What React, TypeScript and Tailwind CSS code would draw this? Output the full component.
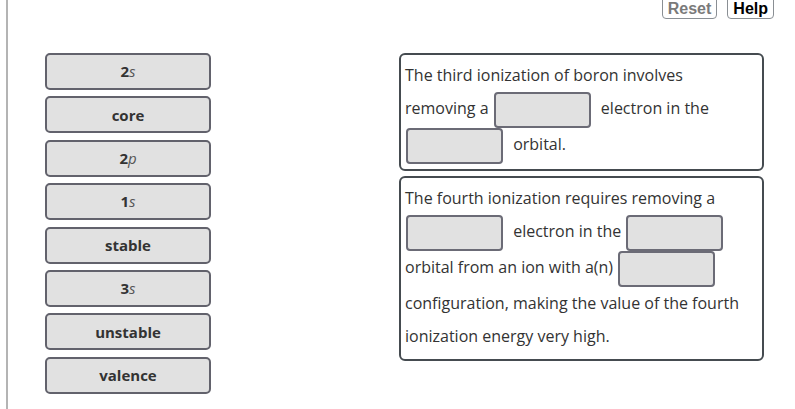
import React from 'react'

const font = { fontFamily: '"Open Sans", "Noto Sans CJK KR", sans-serif' }

const labels: React.ReactNode[] = [
  <><span>2</span><span className="italic font-normal text-[#555]">s</span></>,
  'core',
  <><span>2</span><span className="italic font-normal text-[#555]">p</span></>,
  <><span>1</span><span className="italic font-normal text-[#555]">s</span></>,
  'stable',
  <><span>3</span><span className="italic font-normal text-[#555]">s</span></>,
  'unstable',
  'valence',
]

function Slot() {
  return <span className="inline-block align-middle w-[97px] h-[36px] ml-[1px] mr-[6px] rounded-[4px] border-2 border-[#6b6b76] bg-[#e1e1e1]" />
}

export default function App() {
  return (
    <div className="h-[409px] w-[795px] bg-white overflow-hidden" style={font}>
      <div className="ml-[6px] h-full border-l-2 border-[#b4b4b4]">
        <div className="flex justify-end gap-[10px] pr-[21px] h-[20px]">
          <button className="-mt-[6px] h-[25px] px-[5px] rounded-[4px] border border-[#8a8f94] text-[16px] font-bold text-[#7a7a7a] leading-none pt-[5px]" style={{ fontFamily: '"Liberation Sans", Arial, sans-serif' }}>Reset</button>
          <button className="-mt-[6px] h-[25px] px-[5px] rounded-[4px] border border-[#8a8f94] text-[16px] font-bold text-black leading-none pt-[5px]" style={{ fontFamily: '"Liberation Sans", Arial, sans-serif' }}>Help</button>
        </div>
        <div className="flex mt-[33px]">
          <div className="ml-[37px] w-[166px] flex flex-col gap-[6.4px]">
            {labels.map((l, i) => (
              <div key={i} className="h-[37px] flex items-center justify-center rounded-[5px] border-2 border-[#62626c] bg-[#e1e1e1] text-[15px] font-bold text-[#333]">
                {l}
              </div>
            ))}
          </div>
          <div className="ml-[188px] w-[365px] flex flex-col gap-[5px] text-[16px] text-[#333]">
            <div className="rounded-[6px] border-2 border-[#454b50] pl-[4px] pr-[14px] pt-[4px] pb-[5px] leading-[33px]">
              The third ionization of boron involves removing a <Slot /> electron in the <Slot /> orbital.
            </div>
            <div className="rounded-[6px] border-2 border-[#454b50] pl-[4px] pr-[14px] pt-[4px] pb-[6px] leading-[33px]">
              The fourth ionization requires removing a <Slot /> electron in the <Slot /> orbital from an ion with a(n) <Slot /> configuration, making the value of the fourth ionization energy very high.
            </div>
          </div>
        </div>
      </div>
    </div>
  )
}
